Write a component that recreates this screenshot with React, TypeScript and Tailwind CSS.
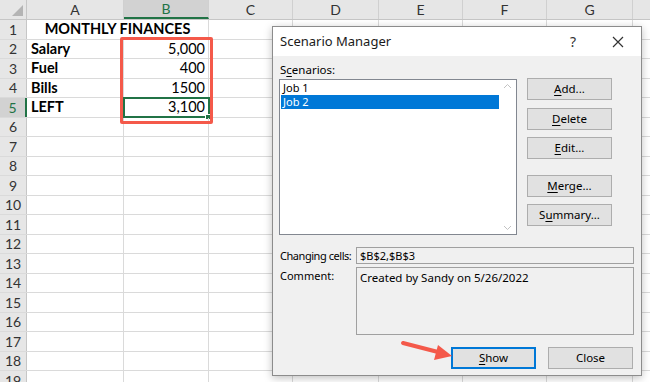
import React from 'react';

const cols = [
    { key: 'A', w: 'w-[97px]' },
    { key: 'B', w: 'w-[85px]' },
    { key: 'C', w: 'w-[84px]' },
    { key: 'D', w: 'w-[86px]' },
    { key: 'E', w: 'w-[84px]' },
    { key: 'F', w: 'w-[84px]' },
    { key: 'G', w: 'w-[86px]' },
    { key: '', w: 'w-[60px]' },
];

const data: Record<number, { a?: string; b?: string }> = {
    2: { a: 'Salary', b: '5,000' },
    3: { a: 'Fuel', b: '400' },
    4: { a: 'Bills', b: '1500' },
    5: { a: 'LEFT', b: '3,100' },
};

const rowNums = Array.from({ length: 19 }, (_, i) => i + 1);

function Underlined({ text, at }: { text: string; at?: number }) {
    if (at === undefined) return <>{text}</>;
    return (
        <>
            {text.slice(0, at)}
            <span className="underline underline-offset-2">{text[at]}</span>
            {text.slice(at + 1)}
        </>
    );
}

function DlgButton({ label, at, primary }: { label: string; at?: number; primary?: boolean }) {
    return (
        <button
            className={`h-[22px] w-[85px] bg-[#e1e1e1] text-[11.5px] text-black flex items-center justify-center ${
                primary ? 'border-2 border-[#0078d7]' : 'border border-[#adadad]'
            }`}
        >
            <Underlined text={label} at={at} />
        </button>
    );
}

function Sheet() {
    return (
        <div className="font-['Lato',sans-serif] text-[14.5px] text-black">
            {/* column headers */}
            <div className="flex h-[20px] bg-[#e6e6e6] border-b border-[#c6c6c6]">
                <div className="w-[27px] shrink-0 relative border-r border-[#c6c6c6]">
                    <div className="absolute right-[3px] bottom-[3px] w-0 h-0 border-l-[11px] border-l-transparent border-b-[11px] border-b-[#b4b4b4]" />
                </div>
                {cols.map((c, i) => (
                    <div
                        key={i}
                        className={`${c.w} shrink-0 flex items-center justify-center border-r border-[#d0d0d0] text-[14px] ${
                            c.key === 'B' ? 'bg-[#d2d2d2] text-[#217346] border-b-2 border-b-[#217346]' : 'text-[#333]'
                        }`}
                    >
                        {c.key}
                    </div>
                ))}
            </div>
            {rowNums.map(n => {
                const row = data[n] || {};
                return (
                    <div key={n} className="flex h-[19.5px] border-b border-[#dadada]">
                        <div
                            className={`w-[27px] shrink-0 flex items-center justify-center text-[14px] ${
                                n === 5
                                    ? 'bg-[#d2d2d2] text-[#217346] border-r-2 border-[#217346]'
                                    : 'bg-[#e6e6e6] text-[#333] border-r border-[#c6c6c6]'
                            }`}
                        >
                            {n}
                        </div>
                        {n === 1 ? (
                            <div className="w-[182px] shrink-0 flex items-center justify-center font-bold border-r border-[#dadada]">
                                MONTHLY FINANCES
                            </div>
                        ) : (
                            <>
                                <div className="w-[97px] shrink-0 flex items-center pl-[4px] font-bold border-r border-[#dadada]">
                                    {row.a}
                                </div>
                                <div
                                    className={`w-[85px] shrink-0 flex items-center justify-end pr-[3px] relative border-r border-[#dadada] ${
                                        n === 5 ? 'outline-2 outline-[#217346] -outline-offset-1' : ''
                                    }`}
                                >
                                    {row.b}
                                    {n === 5 && (
                                        <div className="absolute right-[-3px] bottom-[-3px] w-[6px] h-[6px] bg-[#217346] border border-white" />
                                    )}
                                </div>
                            </>
                        )}
                        {cols.slice(2).map((c, i) => (
                            <div key={i} className={`${c.w} shrink-0 border-r border-[#dadada]`} />
                        ))}
                    </div>
                );
            })}
        </div>
    );
}

function Dialog() {
    return (
        <div className="absolute left-[272px] top-[26px] w-[370px] h-[350px] flex flex-col bg-[#f0f0f0] border border-[#8c8c8c] shadow-[0_2px_8px_rgba(0,0,0,0.25)] font-['Noto_Sans','Open_Sans',sans-serif] text-[11.5px] text-black">
            <div className="h-[29px] bg-white flex items-center pl-[7px] pr-[16px] shrink-0">
                <span className="text-[13px] text-[#1a1a1a]">Scenario Manager</span>
                <span className="ml-auto text-[14px] text-[#333] mr-[36px]">?</span>
                <svg width="12" height="12" viewBox="0 0 12 12" className="mr-[1px]">
                    <path d="M1 1 L11 11 M11 1 L1 11" stroke="#333" strokeWidth="1.2" />
                </svg>
            </div>
            <div className="flex-1 flex flex-col pl-[6px] pr-[7px] pt-[5px]">
                <div className="flex">
                    <div className="flex flex-col">
                        <div className="h-[18px] pl-[1px] leading-[18px]">
                            <Underlined text="Scenarios:" at={1} />
                        </div>
                        <div className="w-[238px] h-[156px] bg-white border border-[#828790] flex">
                            <div className="flex-1 pt-[1px] pl-[1px] text-[11px]">
                                <div className="h-[14px] leading-[14px] pl-[2px] overflow-hidden">Job 1</div>
                                <div className="h-[14px] leading-[14px] pl-[2px] overflow-hidden bg-[#0078d7] text-white">Job 2</div>
                            </div>
                            <div className="w-[17px] flex flex-col justify-between items-center py-[3px]">
                                <svg width="9" height="6" viewBox="0 0 9 6">
                                    <path d="M1 5 L4.5 1.5 L8 5" stroke="#c2c2c2" fill="none" strokeWidth="1" />
                                </svg>
                                <svg width="9" height="6" viewBox="0 0 9 6">
                                    <path d="M1 1 L4.5 4.5 L8 1" stroke="#c2c2c2" fill="none" strokeWidth="1" />
                                </svg>
                            </div>
                        </div>
                    </div>
                    <div className="ml-[10px] pt-[17px] flex flex-col">
                        <DlgButton label="Add..." at={0} />
                        <div className="h-[8px]" />
                        <DlgButton label="Delete" at={0} />
                        <div className="h-[7px]" />
                        <DlgButton label="Edit..." at={0} />
                        <div className="h-[16px]" />
                        <DlgButton label="Merge..." at={0} />
                        <div className="h-[7px]" />
                        <DlgButton label="Summary..." at={1} />
                    </div>
                </div>
                <div className="flex mt-[12px] text-[11px]">
                    <div className="w-[77px] pl-[1px] leading-[17px] whitespace-nowrap tracking-[-0.45px]">Changing cells:</div>
                    <div className="flex-1 h-[17px] border border-[#a0a0a0] bg-[#f0f0f0] pl-[3px] leading-[15px]">$B$2,$B$3</div>
                </div>
                <div className="flex mt-[3px]">
                    <div className="w-[77px] pl-[1px] leading-[17px] text-[11px]">Comment:</div>
                    <div className="flex-1 h-[68px] border border-[#a0a0a0] bg-[#f0f0f0] pl-[3px] pt-[1px]">
                        Created by Sandy on 5/26/2022
                    </div>
                </div>
                <div className="flex justify-end gap-[12px] mt-[12px] pr-[1px]">
                    <DlgButton label="Show" at={0} primary />
                    <DlgButton label="Close" />
                </div>
            </div>
        </div>
    );
}

export default function App() {
    return (
        <div className="relative w-[650px] h-[382px] overflow-hidden bg-white">
            <Sheet />
            {/* annotation box around B2:B5 */}
            <div className="absolute left-[120px] top-[37px] w-[93px] h-[87px] border-[3px] border-[#f4594a] rounded-[2px]" />
            <Dialog />
            {/* annotation arrow */}
            <svg className="absolute left-[396px] top-[334px]" width="62" height="30" viewBox="0 0 62 30">
                <path d="M7 9 L42 18" stroke="#f4594a" strokeWidth="4" strokeLinecap="round" />
                <path d="M56 22 L38 26 L42 11 Z" fill="#f4594a" />
            </svg>
        </div>
    );
}
